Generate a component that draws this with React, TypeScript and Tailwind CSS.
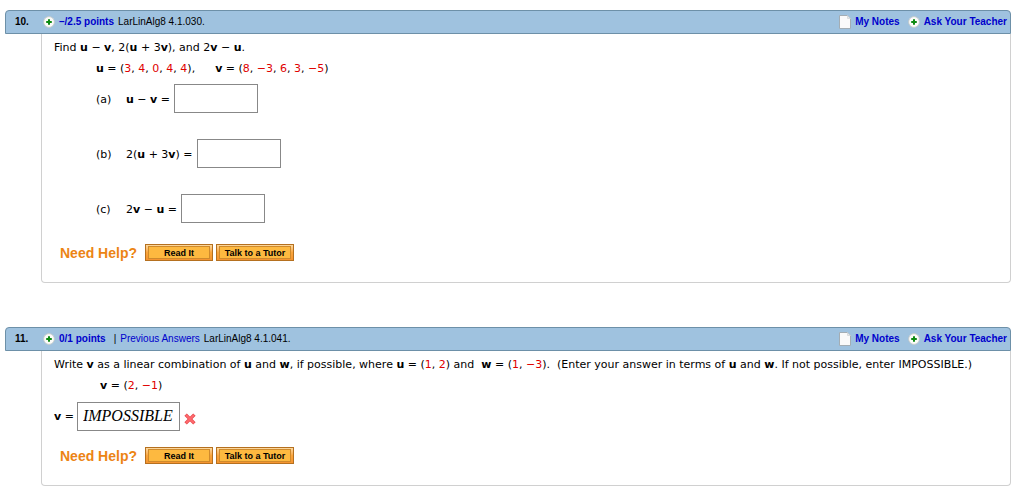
import { useId, type ReactNode } from "react";

function PlusIcon() {
  return (
    <svg width="12" height="12" viewBox="0 0 12 12" className="shrink-0" aria-hidden="true">
      <circle cx="6" cy="6" r="5.4" fill="#fbfbf9" stroke="#c3c9c8" strokeWidth="0.9" />
      <path d="M6 3.2v5.6M3.2 6h5.6" stroke="#0d8a12" strokeWidth="2" fill="none" />
    </svg>
  );
}

function PageIcon() {
  return (
    <svg width="12" height="14" viewBox="0 0 12 14" className="shrink-0" aria-hidden="true">
      <path d="M.5 .5h8l3 3v10H.5z" fill="#fafafa" stroke="#a3adb4" strokeWidth="1" />
      <path d="M8.5 .5v3h3" fill="#e4e7e9" stroke="#d0d5d8" strokeWidth="0.8" />
    </svg>
  );
}

function WrongIcon() {
  return (
    <svg width="12" height="12" viewBox="0 0 12 12" className="shrink-0" role="img" aria-label="Incorrect">
      <path d="M1.6 1.6l8.8 8.8M10.4 1.6l-8.8 8.8" stroke="#e5484c" strokeWidth="3.4" fill="none" />
      <path d="M2 2l8 8M10 2l-8 8" stroke="#ff6a6e" strokeWidth="1.8" fill="none" />
    </svg>
  );
}

function Red({ children }: { children: ReactNode }) {
  return <span className="text-[#e00000]">{children}</span>;
}

function HelpButton({ children, className }: { children: ReactNode; className: string }) {
  return (
    <button
      type="button"
      className={`h-[17px] cursor-pointer border border-[#b5701f] bg-linear-to-b from-[#fbd9a0] via-[#f9a53c] to-[#f59330] p-px font-['Liberation_Sans',Arial,sans-serif] text-[9px] font-bold text-black ${className}`}
    >
      <span className="mx-px flex h-full items-center justify-center border border-[#cf8a2c] bg-[#fdb940]">
        {children}
      </span>
    </button>
  );
}

function NeedHelp() {
  return (
    <div className="flex items-center pl-1.5 font-['Liberation_Sans',Arial,sans-serif]">
      <span className="w-[85px] text-sm font-bold leading-4 text-[#ec8414]">Need Help?</span>
      <div className="flex gap-[3px]">
        <HelpButton className="w-[68px]">Read It</HelpButton>
        <HelpButton className="w-[78px]">Talk to a Tutor</HelpButton>
      </div>
    </div>
  );
}

type QuestionProps = {
  number: string;
  points: string;
  previous?: boolean;
  source: string;
  children: ReactNode;
};

function Question({ number, points, previous, source, children }: QuestionProps) {
  return (
    <section>
      <header className="flex h-6 items-center rounded-t border border-[#6d90a8] bg-[#9fc2df] pr-[3px] pl-[9px] font-['Liberation_Sans',Arial,sans-serif] text-[10px] text-black">
        <h2 className="w-7 font-bold">{number}</h2>
        <div className="flex items-center">
          <PlusIcon />
          <a href="#points" className="ml-1 font-bold text-[#0000cc]">{points}</a>
          {previous && (
            <>
              <span className="ml-2">|</span>
              <a href="#previous" className="ml-1 text-[#0000cc]">Previous Answers</a>
            </>
          )}
          <span className="ml-1">{source}</span>
        </div>
        <nav className="ml-auto flex items-center font-bold text-[#0000cc]">
          <PageIcon />
          <a href="#notes" className="ml-1">My Notes</a>
          <span className="ml-2 flex">
            <PlusIcon />
          </span>
          <a href="#teacher" className="ml-1">Ask Your Teacher</a>
        </nav>
      </header>
      <div className="ml-9 rounded-b border border-t-0 border-[#d0d0d0] pt-1.5 pb-[21px] pl-3">{children}</div>
    </section>
  );
}

function Part({ tag, children }: { tag: string; children: ReactNode }) {
  const id = useId();
  return (
    <div className="flex items-end">
      <span className="w-[30px] pb-[5px]">({tag})</span>
      <label htmlFor={id} className="pb-[5px]">{children}</label>
      <input id={id} type="text" className="ml-1 h-[29px] w-[84px] border border-[#888888] bg-white px-1" />
    </div>
  );
}

export default function App() {
  return (
    <main className="bg-white pt-2.5 pr-[13px] pb-3 pl-[5px] font-['DejaVu_Sans',Verdana,sans-serif] text-[11px] leading-4 text-black">
      <div className="flex flex-col gap-11">
        <Question number="10." points="–/2.5 points" source="LarLinAlg8 4.1.030.">
          <p>
            Find <b>u</b> − <b>v</b>, 2(<b>u</b> + 3<b>v</b>), and 2<b>v</b> − <b>u</b>.
          </p>
          <div className="mt-[5px] pl-[42px]">
            <p className="flex gap-5">
              <span>
                <b>u</b> = (<Red>3</Red>, <Red>4</Red>, <Red>0</Red>, <Red>4</Red>, <Red>4</Red>),
              </span>
              <span>
                <b>v</b> = (<Red>8</Red>, <Red>−3</Red>, <Red>6</Red>, <Red>3</Red>, <Red>−5</Red>)
              </span>
            </p>
            <div className="mt-[7px] flex flex-col gap-[26px]">
              <Part tag="a"><b>u</b> − <b>v</b> =</Part>
              <Part tag="b">2(<b>u</b> + 3<b>v</b>) =</Part>
              <Part tag="c">2<b>v</b> − <b>u</b> =</Part>
            </div>
          </div>
          <div className="mt-[21px]">
            <NeedHelp />
          </div>
        </Question>

        <Question number="11." points="0/1 points" previous source="LarLinAlg8 4.1.041.">
          <p>
            Write <b>v</b> as a linear combination of <b>u</b> and <b>w</b>, if possible, where <b>u</b> = (<Red>1</Red>,{" "}
            <Red>2</Red>) and&nbsp; <b>w</b> = (<Red>1</Red>, <Red>−3</Red>).&nbsp; (Enter your answer in terms of{" "}
            <b>u</b> and <b>w</b>. If not possible, enter IMPOSSIBLE.)
          </p>
          <p className="mt-[5px] pl-[46px]">
            <b>v</b> = (<Red>2</Red>, <Red>−1</Red>)
          </p>
          <div className="mt-2 flex items-center">
            <label htmlFor="answer-v"><b>v</b> =</label>
            <input
              id="answer-v"
              type="text"
              defaultValue="IMPOSSIBLE"
              className="mr-1 ml-[3px] h-[29px] w-[103px] border border-[#888888] bg-white px-[5px] pb-0.5 font-['Liberation_Serif','Times_New_Roman',serif] text-base italic"
            />
            <span className="pt-1">
              <WrongIcon />
            </span>
          </div>
          <div className="mt-4">
            <NeedHelp />
          </div>
        </Question>
      </div>
    </main>
  );
}
